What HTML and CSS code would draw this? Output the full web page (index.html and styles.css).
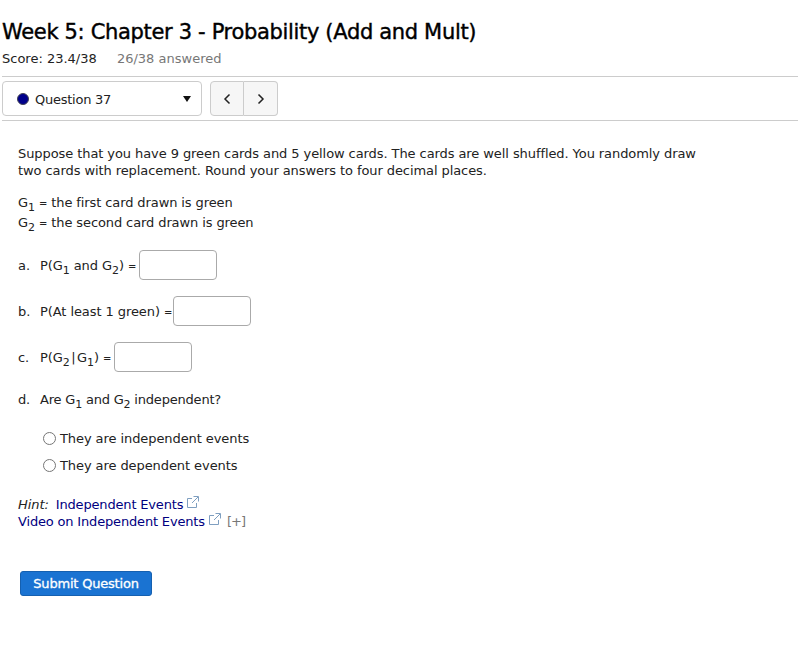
FILE: index.html
```html
<!DOCTYPE html>
<html lang="en">
  <head>
    <meta charset="UTF-8" />
    <title>Week 5: Chapter 3 - Probability (Add and Mult)</title>
    <link rel="stylesheet" href="styles.css">
  </head>
  <body>
    <div class="header">
      <h1>Week 5: Chapter 3 - Probability (Add and Mult)</h1>
      <div class="score">Score: 23.4/38 <span class="answered">26/38 answered</span></div>
    </div>

    <div class="nav">
      <div class="select">
        <span class="dot"></span>
        <span class="select-label">Question 37</span>
        <span class="caret"></span>
      </div>
      <div class="pager">
        <button class="pager-btn" type="button">
          <svg width="8" height="12" viewBox="0 0 8 12"><path d="M6.5 1.5 2 6l4.5 4.5" fill="none" stroke="#222" stroke-width="1.5"/></svg>
        </button>
        <button class="pager-btn" type="button">
          <svg width="8" height="12" viewBox="0 0 8 12"><path d="M1.5 1.5 6 6l-4.5 4.5" fill="none" stroke="#222" stroke-width="1.5"/></svg>
        </button>
      </div>
    </div>

    <div class="question">
      <p class="intro">Suppose that you have 9 green cards and 5 yellow cards. The cards are well shuffled. You randomly draw two cards with replacement. Round your answers to four decimal places.</p>

      <p class="defs">G<sub>1</sub> <span class="eq">=</span> the first card drawn is green<br />G<sub>2</sub> <span class="eq">=</span> the second card drawn is green</p>

      <div class="part">
        <span class="letter">a.</span>
        <span class="expr">P(G<sub>1</sub> and G<sub>2</sub>) <span class="eq">=</span></span>
        <input class="answer" type="text" />
      </div>
      <div class="part">
        <span class="letter">b.</span>
        <span class="expr expr-tight">P(At least 1 green) <span class="eq">=</span></span>
        <input class="answer" type="text" />
      </div>
      <div class="part">
        <span class="letter">c.</span>
        <span class="expr">P(G<sub>2</sub><span class="bar">|</span>G<sub>1</sub>) <span class="eq">=</span></span>
        <input class="answer" type="text" />
      </div>
      <div class="part part-text">
        <span class="letter">d.</span>
        <span>Are G<sub>1</sub> and G<sub>2</sub> independent?</span>
      </div>

      <div class="choices">
        <label class="choice"><input type="radio" name="d" /> They are independent events</label>
        <label class="choice"><input type="radio" name="d" /> They are dependent events</label>
      </div>

      <div class="hints">
        <div><em>Hint:</em> <a href="#">Independent Events</a>
          <svg class="ext" width="12" height="12" viewBox="0 0 12 12"><path d="M5 2.5H.5v9h9V7M6.5.5h5v5M11 1 5 7" fill="none" stroke="#7f9fc0"/></svg>
        </div>
        <div><a href="#">Video on Independent Events</a>
          <svg class="ext" width="12" height="12" viewBox="0 0 12 12"><path d="M5 2.5H.5v9h9V7M6.5.5h5v5M11 1 5 7" fill="none" stroke="#7f9fc0"/></svg>
          <span class="more">[+]</span>
        </div>
      </div>

      <button class="submit" type="button">Submit Question</button>
    </div>
  </body>
</html>
```
FILE: styles.css
```css
body {
  margin: 0;
  padding: 19px 0 0 2px;
  font-family: "DejaVu Sans", sans-serif;
  font-size: 13px;
  color: #222;
  background-color: #fff;
}

/* Title and score */
.header {
  border-bottom: 1px solid #ccc;
  padding-bottom: 9px;
}

h1 {
  margin: 0;
  font-size: 21px;
  font-weight: normal;
  line-height: 26px;
  letter-spacing: -0.33px;
  color: #000;
  -webkit-text-stroke: 0.4px #000;
}

.score {
  margin-top: 6px;
  line-height: 16px;
}

.answered {
  margin-left: 16px;
  color: #777;
}

/* Question select and pager */
.nav {
  display: flex;
  gap: 8px;
  padding: 4px 0;
  border-bottom: 1px solid #ccc;
}

.select {
  display: flex;
  align-items: center;
  box-sizing: border-box;
  width: 200px;
  height: 35px;
  padding: 0 10px 0 14px;
  border: 1px solid #ccc;
  border-radius: 4px;
}

.dot {
  width: 12px;
  height: 12px;
  border-radius: 50%;
  background-color: #00008b;
  border: 1px solid #445;
  box-sizing: border-box;
}

.select-label {
  flex: 1;
  margin: 1px 0 0 6px;
  letter-spacing: -0.25px;
}

.caret {
  border-left: 4px solid transparent;
  border-right: 4px solid transparent;
  border-top: 6px solid #111;
}

.pager {
  display: flex;
}

.pager-btn {
  display: flex;
  align-items: center;
  justify-content: center;
  width: 34px;
  height: 35px;
  padding: 0;
  background-color: #f6f6f6;
  border: 1px solid #ccc;
}

.pager-btn:first-child {
  border-radius: 4px 0 0 4px;
}

.pager-btn:last-child {
  border-left: none;
  border-radius: 0 4px 4px 0;
}

/* Question body */
.question {
  padding: 24px 0 0 16px;
  letter-spacing: -0.08px;
}

p {
  margin: 0;
}

.intro {
  width: 700px;
  line-height: 17px;
}

.defs {
  margin: 14px 0 17px;
  line-height: 19px;
  letter-spacing: -0.1px;
}

sub {
  font-size: 11px;
  line-height: 0;
}

.eq {
  font-size: 10px;
}

.bar {
  margin: 0 1.5px;
}

.part {
  display: flex;
  align-items: center;
  height: 30px;
  margin-top: 16px;
  white-space: pre-wrap;
}

.letter {
  width: 22px;
}

.expr {
  margin-right: 3px;
}

.expr-tight {
  margin-right: 1px;
}

.answer {
  box-sizing: border-box;
  width: 78px;
  height: 30px;
  border: 1px solid #aaa;
  border-radius: 4px;
}

.part-text {
  height: 20px;
  margin-top: 17px;
  letter-spacing: -0.2px;
}

.choices {
  margin: 16px 0 0 25px;
}

.choice {
  display: flex;
  align-items: center;
  height: 27px;
}

.choice input {
  width: 13px;
  height: 13px;
  margin: 0 4px 0 0;
}

.hints {
  margin-top: 17px;
  line-height: 17px;
}

em {
  margin-right: 3px;
}

a {
  color: #000080;
  text-decoration: none;
  letter-spacing: -0.17px;
}

.ext {
  vertical-align: 1px;
}

.more {
  color: #777;
  margin-left: 2px;
  letter-spacing: -1px;
}

.submit {
  display: block;
  width: 132px;
  height: 25px;
  margin: 41px 0 0 2px;
  padding: 0;
  font-family: inherit;
  font-size: 13px;
  letter-spacing: -0.2px;
  color: #fff;
  -webkit-text-stroke: 0.3px #fff;
  background-color: #1a73d2;
  border: 1px solid #1560b0;
  border-radius: 3px;
}
```
